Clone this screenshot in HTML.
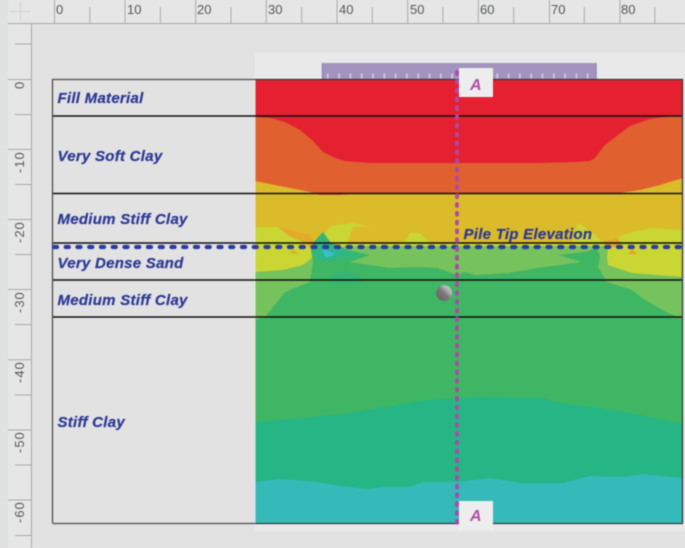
<!DOCTYPE html>
<html>
<head>
<meta charset="utf-8">
<style>
html,body{margin:0;padding:0;background:#e2e2e2;width:685px;height:548px;overflow:hidden}
svg{display:block;filter:blur(0.4px)}
.l{font:italic bold 15px "Liberation Sans",sans-serif;fill:#2e3a96;letter-spacing:.27px;stroke:#2e3a96;stroke-width:.25px}
.r{font:13px "Liberation Sans",sans-serif;fill:#55585c}
</style>
</head>
<body>
<svg width="685" height="548" viewBox="0 0 685 548" xmlns="http://www.w3.org/2000/svg">
<defs>
<linearGradient id="b" x1="0" y1="1" x2="1" y2="0">
<stop offset="0" stop-color="#5e5e5e"/><stop offset=".5" stop-color="#7a7a7a"/><stop offset=".72" stop-color="#b5b5b5"/><stop offset="1" stop-color="#c8c8c8"/>
</linearGradient>
<clipPath id="f"><rect x="255.5" y="79" width="427" height="444"/></clipPath>
</defs>
<rect width="685" height="548" fill="#e2e2e2"/>
<rect x="0" y="0" width="8" height="548" fill="#dfe2e1"/>
<rect x="8" y="0" width="677" height="23" fill="#e6e6e6"/>
<rect x="8" y="23" width="23" height="525" fill="#e6e6e6"/>
<g stroke="#a8a8a8" stroke-width="1" fill="none">
<path d="M8 23.5H685M31.5 23V548"/>
<path d="M10 11.5H30M20.5 2V21" stroke="#d0d0d0"/>
<path d="M54.5 0V23M125 0V23M195.7 0V23M266.3 0V23M337 0V23M407.7 0V23M478.3 0V23M549.5 0V23M620 0V23"/>
<path d="M89.8 7V23M160.4 7V23M231 7V23M301.7 7V23M372.3 7V23M443 7V23M513.7 7V23M584.3 7V23M654.8 7V23"/>
<path d="M8 79.5H31M8 149.5H31M8 219.5H31M8 289.5H31M8 359.7H31M8 430H31M8 500H31"/>
<path d="M15 44H31M15 114.5H31M15 184.5H31M15 254.5H31M15 324.5H31M15 395H31M15 465H31M15 535.5H31"/>
</g>
<g class="r">
<text class="r" x="56" y="14">0</text>
<text class="r" x="127" y="14">10</text>
<text class="r" x="197" y="14">20</text>
<text class="r" x="268" y="14">30</text>
<text class="r" x="339" y="14">40</text>
<text class="r" x="410" y="14">50</text>
<text class="r" x="480" y="14">60</text>
<text class="r" x="551" y="14">70</text>
<text class="r" x="621" y="14">80</text>
<text class="r" transform="translate(24 89) rotate(-90)">0</text>
<text class="r" transform="translate(24 173) rotate(-90)" letter-spacing="1">-10</text>
<text class="r" transform="translate(24 243) rotate(-90)" letter-spacing="1">-20</text>
<text class="r" transform="translate(24 313) rotate(-90)" letter-spacing="1">-30</text>
<text class="r" transform="translate(24 383) rotate(-90)" letter-spacing="1">-40</text>
<text class="r" transform="translate(24 453) rotate(-90)" letter-spacing="1">-50</text>
<text class="r" transform="translate(24 523) rotate(-90)" letter-spacing="1">-60</text>
</g>
<rect x="255" y="53" width="431" height="478" fill="#e9e9e9"/>
<rect x="322.5" y="63" width="274" height="17" fill="#a393bf"/>
<path d="M322.5 63V79M596 63V79" stroke="#9488b8" stroke-width="1.5"/>
<path d="M327 76H596" stroke="#d4cde0" stroke-width="5" stroke-dasharray="1.6 9.7" fill="none"/>
<g clip-path="url(#f)">
<rect x="255" y="79" width="428" height="445" fill="#e52031"/>
<path fill="#e0602f" d="M255 117L270 118L285 122L300 130L312 140L323 152L335 158L345 161L370 163L420 163L480 163L540 163L575 162L590 161L595 158L605 145L618 135L630 126L650 119L665 117L683 116V300H255Z"/>
<path fill="#dcbb2a" d="M255 181L270 184L290 188L310 192L320 195L340 195L360 193L620 193L640 190L660 185L683 178V330H255Z"/>
<path fill="#e3ab2a" d="M278 227L300 245L318 248L310 235Z"/>
<path fill="#c9d634" d="M255 227L278 227L287 235L305 243L312 250L330 226L352 223L370 226L353 227L347 243L403 244L410 233L420 233L430 243L572 243L578 223L593 233L603 243L612 247L618 237L632 232L652 228L683 230V300H255Z"/>
<path fill="#e3a52a" d="M290 253L293 250L299 254ZM628 254L632 249L637 254Z"/>
<path fill="#e3a52a" d="M600 243L612 247L622 247L618 238Z"/>
<path fill="#76c25c" d="M255 272L283 270L303 265L312 258L345 246L608 246L607 257L608 265L632 273L683 277V330H255Z"/>
<path fill="#3fb663" d="M265 317L273 307L285 292L310 282L313 262L311 250L313 243L323 232L330 242L347 250L370 255L350 262L390 268L417 267L437 268L457 275L465 272L475 275L508 273L538 268L582 262L558 255L585 252L597 248L600 257L598 267L607 282L632 290L645 300L668 313L683 319V440H255V320Z"/>
<path fill="#35b777" d="M313 243L323 232L330 242L345 250L370 255L350 260L320 262L312 255Z"/>
<path fill="#2db58c" d="M316 248L325 243L340 250L350 253L330 260L318 258Z"/>
<path fill="#3bbfc6" d="M322 250L326 250L336 254L326 258Z"/>
<path fill="#36b475" d="M333 275L345 270L365 280L350 284L330 283Z"/>
<path fill="#26b585" d="M255 422L300 418L345 414L385 407L427 400L480 397L545 398L553 402L607 409L640 415L683 424V500H255Z"/>
<path fill="#35bab9" d="M255 482L280 479L317 482L340 486L367 489L383 487L410 487L423 482L457 482L490 478L520 483L563 483L590 476L623 477L643 474L683 478V525H255Z"/>
</g>
<g fill="none" stroke="#0f0f0f" stroke-width="1.4">
<path d="M52 116H682M52 193.5H682M52 243H682M52 280H682M52 317H682"/>
</g>
<path d="M52.5 523V79.5H682.5V523.5H52.5" fill="none" stroke="#4d4d4d" stroke-width="1.3"/>
<path d="M255.5 79.5H682.5V523.5H255.5" fill="none" stroke="#1c2a2a" stroke-width="1" opacity=".65"/>
<path d="M54 247H685" stroke="#2b3c9e" stroke-width="4.3" stroke-linecap="round" stroke-dasharray="3 8.75" fill="none"/>
<path d="M457 72V523" stroke="#ad4aa5" stroke-width="3.8" stroke-linecap="round" stroke-dasharray="2 6.8" fill="none"/>
<circle cx="444" cy="293" r="8" fill="url(#b)"/>
<rect x="459" y="68" width="34" height="29" fill="#ededed"/>
<rect x="459" y="501" width="34" height="29" fill="#ededed"/>
<text x="470" y="90" font-family="Liberation Sans" font-size="16" font-weight="bold" font-style="italic" fill="#b14fa5">A</text>
<text x="470" y="521" font-family="Liberation Sans" font-size="16" font-weight="bold" font-style="italic" fill="#b14fa5">A</text>
<text class="l" x="57.5" y="103">Fill Material</text>
<text class="l" x="57.5" y="161">Very Soft Clay</text>
<text class="l" x="57.5" y="224">Medium Stiff Clay</text>
<text class="l" x="57.5" y="268">Very Dense Sand</text>
<text class="l" x="57.5" y="305">Medium Stiff Clay</text>
<text class="l" x="57.5" y="427">Stiff Clay</text>
<text class="l" x="463.5" y="239">Pile Tip Elevation</text>
</svg>
</body>
</html>
